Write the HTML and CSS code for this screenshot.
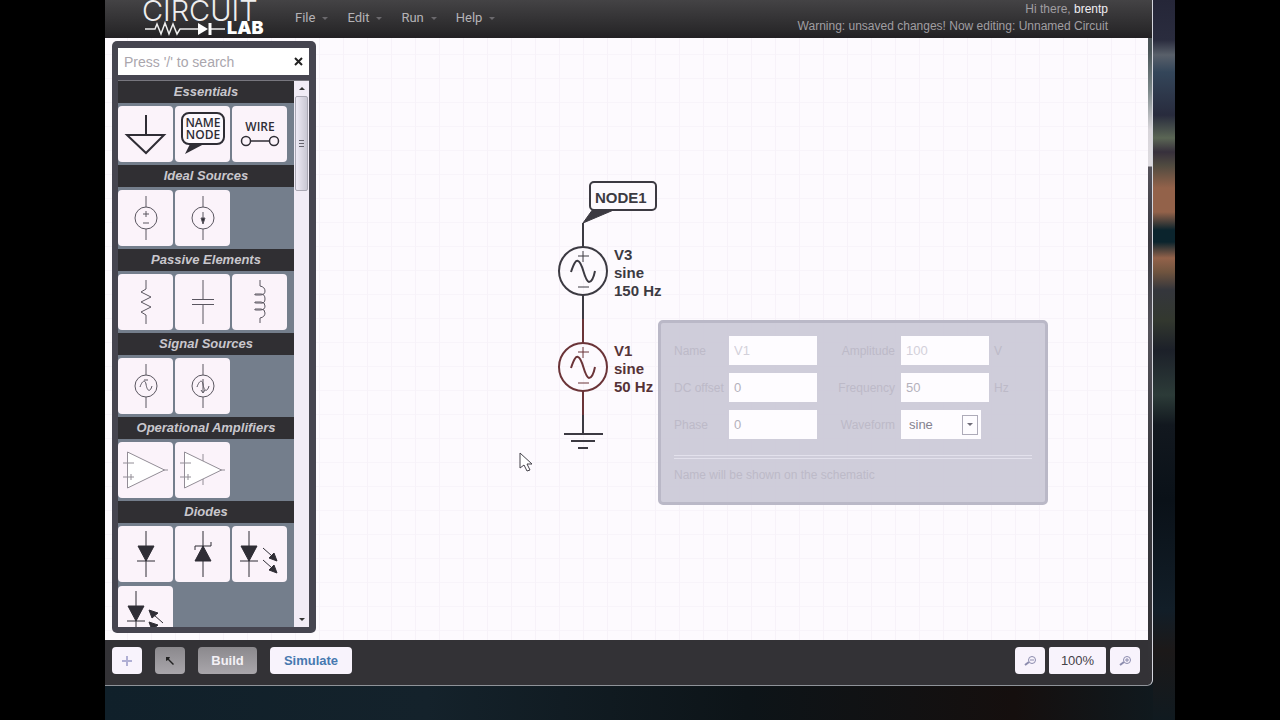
FILE: index.html
```html
<!DOCTYPE html>
<html lang="en">
<head>
    <meta charset="UTF-8">
    <meta name="viewport" content="width=device-width, initial-scale=1.0">
    <title>CircuitLab</title>
    <link rel="stylesheet" href="styles.css">
</head>
<body>
    <div class="desktop">
        <div class="window">
            <header class="topbar">
                <a href="#" class="logo" aria-label="CircuitLab home">
                    <svg width="130" height="36" viewBox="0 0 130 36">
                        <text class="logo-circuit" x="-2" y="21" font-size="29">CIRCUIT</text>
                        <path d="M1 29h10l2-5 4 10 4-11 4 11 4-10 4 10 3-5h18M66 29h15" fill="none" stroke="#eee" stroke-width="1.5"/>
                        <path d="M54 23l10 6-10 6z" fill="#fff"/>
                        <path d="M66 23v12" stroke="#fff" stroke-width="3"/>
                        <text class="logo-lab" x="83" y="34" font-size="18">LAB</text>
                    </svg>
                </a>
                <nav class="menu">
                    <button type="button">File</button>
                    <button type="button">Edit</button>
                    <button type="button">Run</button>
                    <button type="button">Help</button>
                </nav>
                <div class="account">
                    <div>Hi there, <a href="#">brentp</a></div>
                    <div>Warning: unsaved changes! Now editing: Unnamed Circuit</div>
                </div>
            </header>

            <main class="workspace">
                <svg class="schematic" width="100%" height="100%">
                    <g fill="none" stroke="#3c3a42" stroke-width="2">
                        <path d="M478 185v24M478 257v24"/>
                        <circle cx="478" cy="233" r="24"/>
                        <path d="M466 234c3-9 5-12 7-11c5 1 6 20 11 21c3 0 5-6 6-11"/>
                        <path d="M473 218h11M478 213v11M473 249h11" stroke-width="1"/>
                        <path d="M478 185l10-14h23z" fill="#3c3a42" stroke-width="1"/>
                        <rect x="485" y="144" width="66" height="28" rx="4" fill="#fdfafe"/>
                        <path d="M478 377v19M459 396h39M466 403h24M473 410h10"/>
                    </g>
                    <g fill="none" stroke="#6b3438" stroke-width="2">
                        <path d="M478 281v24M478 353v24"/>
                        <circle cx="478" cy="329" r="24"/>
                        <path d="M466 330c3-9 5-12 7-11c5 1 6 20 11 21c3 0 5-6 6-11"/>
                        <path d="M473 314h11M478 309v11M473 345h11" stroke-width="1"/>
                    </g>
                    <g class="part-label">
                        <text x="490" y="165">NODE1</text>
                        <text x="509" y="222">V3</text>
                        <text x="509" y="240">sine</text>
                        <text x="509" y="258">150 Hz</text>
                    </g>
                    <g class="part-label selected">
                        <text x="509" y="318">V1</text>
                        <text x="509" y="336">sine</text>
                        <text x="509" y="354">50 Hz</text>
                    </g>
                    <path d="M415 415v15l4-3 3 6 3-1-3-6h5z" fill="#fff" stroke="#45434b" stroke-width="1"/>
                </svg>

                <aside class="palette">
                    <div class="search">
                        <input type="text" placeholder="Press '/' to search" aria-label="Search parts">
                        <button type="button" aria-label="Clear search">
                            <svg width="10" height="10" viewBox="0 0 10 10"><path d="M2 1l7 7M9 1l-7 7" stroke="#222" stroke-width="2"/></svg>
                        </button>
                    </div>
                    <div class="parts">
                        <div class="part-list">
                            <h2>Essentials</h2>
                            <div class="tiles">
                                <button type="button" aria-label="Ground">
                                    <svg viewBox="0 0 55 56"><path d="M28 9v20M9 29h37L28 47z" fill="none" stroke="#2f2d35" stroke-width="2"/></svg>
                                </button>
                                <button type="button">
                                    <svg viewBox="0 0 55 56">
                                        <rect x="7" y="7" width="42" height="31" rx="7" fill="#fdf8fd" stroke="#2f2d35" stroke-width="2"/>
                                        <path d="M10 48l5-10h14z" fill="#2f2d35"/>
                                        <text class="tile-text" x="28" y="21" font-size="12">NAME</text>
                                        <text class="tile-text" x="28" y="33" font-size="12">NODE</text>
                                    </svg>
                                </button>
                                <button type="button">
                                    <svg viewBox="0 0 55 56">
                                        <text class="tile-text" x="28" y="25" font-size="12">WIRE</text>
                                        <g fill="none" stroke="#2f2d35" stroke-width="1.5"><circle cx="14" cy="35" r="4.5"/><circle cx="42" cy="35" r="4.5"/><path d="M18 35h20"/></g>
                                    </svg>
                                </button>
                            </div>
                            <h2>Ideal Sources</h2>
                            <div class="tiles">
                                <button type="button" aria-label="Voltage source">
                                    <svg class="line-icon" viewBox="0 0 55 56"><circle cx="28" cy="28" r="11"/><path d="M28 6v11M28 39v11M25 24h6M28 21v6M25 33h6"/></svg>
                                </button>
                                <button type="button" aria-label="Current source">
                                    <svg class="line-icon" viewBox="0 0 55 56"><circle cx="28" cy="28" r="11"/><path d="M28 6v11M28 39v11M28 22v8"/><path d="M26 28h4l-2 6z" fill="#2f2d35"/></svg>
                                </button>
                            </div>
                            <h2>Passive Elements</h2>
                            <div class="tiles">
                                <button type="button" aria-label="Resistor">
                                    <svg class="line-icon" viewBox="0 0 55 56"><path d="M28 6v9l-5 3 10 5-10 5 10 5-10 5 5 3v9"/></svg>
                                </button>
                                <button type="button" aria-label="Capacitor">
                                    <svg class="line-icon" viewBox="0 0 55 56"><path d="M28 6v19M17 25.5h22M17 30.5h22M28 31v19"/></svg>
                                </button>
                                <button type="button" aria-label="Inductor">
                                    <svg class="line-icon" viewBox="0 0 55 56"><path d="M28 6v6q5 1 5 5t-5 4h-4q-2 0-1-1h6q4 0 4 5t-5 4h-4q-2 0-1-1h6q4 0 4 4t-5 4h-4q-2 0-1-1h6q4 0 4 4t-5 5v5"/></svg>
                                </button>
                            </div>
                            <h2>Signal Sources</h2>
                            <div class="tiles">
                                <button type="button" aria-label="Voltage signal">
                                    <svg class="line-icon" viewBox="0 0 55 56"><circle cx="28" cy="28" r="11"/><path d="M28 6v11M28 39v11M22 29c2-6 5-8 6-3c1 7 4 9 6 2M26 22h4"/></svg>
                                </button>
                                <button type="button" aria-label="Current signal">
                                    <svg class="line-icon" viewBox="0 0 55 56"><circle cx="28" cy="28" r="11"/><path d="M28 6v11M28 39v11M22 29c2-6 5-8 6-3c1 7 4 9 6 2M28 21v13M26 32l2 3 2-3"/></svg>
                                </button>
                            </div>
                            <h2>Operational Amplifiers</h2>
                            <div class="tiles">
                                <button type="button" aria-label="Op-amp">
                                    <svg class="line-icon thin" viewBox="0 0 55 56"><path d="M9.5 10v36l37-18zM46 28h4M5 21h11M5 35h11M13 32v6" fill="#fff"/></svg>
                                </button>
                                <button type="button" aria-label="Op-amp with supply rails">
                                    <svg class="line-icon thin" viewBox="0 0 55 56"><path d="M9.5 10v36l37-18zM46 28h4M5 21h11M5 35h11M13 32v6M28 12v7M28 37v6" fill="#fff"/></svg>
                                </button>
                            </div>
                            <h2>Diodes</h2>
                            <div class="tiles">
                                <button type="button" aria-label="Diode">
                                    <svg class="solid-icon" viewBox="0 0 55 56"><path d="M28 5v46M19 35h18"/><path d="M20 20h16l-8 15z"/></svg>
                                </button>
                                <button type="button" aria-label="Zener diode">
                                    <svg class="solid-icon" viewBox="0 0 55 56"><path d="M28 5v46"/><path d="M20 24v-4h16v-4" fill="none"/><path d="M20 35h16l-8-15z"/></svg>
                                </button>
                                <button type="button" aria-label="LED">
                                    <svg class="solid-icon" viewBox="0 0 55 56"><path d="M17 5v46M8 35h18M31 22l9 8M31 34l9 8"/><path d="M9 20h16l-8 15zM45 35l-8-3 5-5zM45 47l-8-3 5-5z"/></svg>
                                </button>
                                <button type="button" aria-label="Photodiode">
                                    <svg class="solid-icon" viewBox="0 0 55 56"><path d="M18 5v46M9 35h18M45 37l-9-8M45 49l-9-8"/><path d="M10 20h16l-8 15zM31 24l9 3-6 5zM31 36l9 3-6 5z"/></svg>
                                </button>
                            </div>
                        </div>
                        <div class="scrollbar">
                            <span class="arrow up"></span>
                            <div class="thumb"></div>
                            <span class="arrow down"></span>
                        </div>
                    </div>
                </aside>

                <form class="properties">
                    <div class="fields">
                        <label for="name">Name</label>
                        <input type="text" id="name" class="faded" value="V1">
                        <label for="amp">Amplitude</label>
                        <input type="text" id="amp" class="faded" value="100">
                        <span class="unit">V</span>
                        <label for="offset">DC offset</label>
                        <input type="text" id="offset" value="0">
                        <label for="freq">Frequency</label>
                        <input type="text" id="freq" value="50">
                        <span class="unit">Hz</span>
                        <label for="phase">Phase</label>
                        <input type="text" id="phase" value="0">
                        <label for="wave">Waveform</label>
                        <span class="select-box">
                            <select id="wave"><option>sine</option></select>
                            <span class="select-arrow"></span>
                        </span>
                    </div>
                    <p>Name will be shown on the schematic</p>
                </form>
            </main>

            <footer class="toolbar">
                <button type="button" class="square" aria-label="Pan">
                    <svg width="12" height="12" viewBox="0 0 12 12"><path d="M6 1v10M1 6h10" stroke="#b0afd4" stroke-width="2"/></svg>
                </button>
                <button type="button" class="square pressed" aria-label="Select">
                    <svg width="12" height="12" viewBox="0 0 12 12"><path d="M2 2h4L5 4l5 5-1 1-5-5-2 1z" fill="#222"/></svg>
                </button>
                <button type="button" class="build pressed">Build</button>
                <button type="button" class="simulate">Simulate</button>
                <div class="zoom">
                    <button type="button" class="square" aria-label="Zoom out">
                        <svg width="14" height="12" viewBox="0 0 14 12"><g fill="none" stroke="#8c8cae"><circle cx="9" cy="5" r="3.5"/><path d="M7 5h4"/><path d="M6 7l-4 3" stroke-width="2"/></g></svg>
                    </button>
                    <input type="text" value="100%" aria-label="Zoom level">
                    <button type="button" class="square" aria-label="Zoom in">
                        <svg width="14" height="12" viewBox="0 0 14 12"><g fill="none" stroke="#8c8cae"><circle cx="9" cy="5" r="3.5"/><path d="M7 5h4M9 3v4"/><path d="M6 7l-4 3" stroke-width="2"/></g></svg>
                    </button>
                </div>
            </footer>
        </div>
    </div>
</body>
</html>
```

FILE: styles.css
```css
* {
    box-sizing: border-box;
}
body {
    margin: 0;
    background: #000;
    font-family: Arial, "Liberation Sans", sans-serif;
}
button, input, select {
    font-family: inherit;
    border: 0;
    padding: 0;
    margin: 0;
}
.desktop {
    min-height: 100vh;
    margin: 0 105px;
    padding: 0 22px 34px 0;
    display: flex;
    background:
        linear-gradient(90deg, #10202a 0, #14222b 30%, #0d1418 60%, #150f0e 85%, transparent 98%) bottom / 100% 34px no-repeat,
        linear-gradient(#252638 0, #2a2c3e 40px, #59606a 55px, #34465a 72px, #282b3d 115px, #5b6655 138px, #37303c 152px, #4f4a40 165px, #93624a 188px, #93624a 212px, #0b242d 230px, #0b242d 242px, #93624a 258px, #70543f 272px, #34363c 290px, #33382f 320px, #1c2029 350px, #2c3b38 395px, #12181f 425px, #0a1118 500px, #121e28 610px, #1c1919 650px, #101a20 100%) right / 22px 100% no-repeat,
        #10191e;
}
.window {
    flex: 1;
    display: flex;
    flex-direction: column;
    background:
        linear-gradient(#4a4b50 0, #4a5558 50px, #7b8789 90px, #d8d5da 130px, #dedbe0 166px, #55525a 167px, #3a3940 240px, #55535b 330px, #38383d 480px, #333236 100%) right / 4px 100% no-repeat,
        #333236;
    border-right: 1px solid #d5d6de;
    border-bottom: 1px solid #8f9399;
    border-bottom-right-radius: 6px;
    padding-right: 4px;
}

/* top bar */
.topbar {
    height: 38px;
    display: flex;
    align-items: center;
    padding: 0 44px 2px 39px;
    background: linear-gradient(#444345, #2a292b 80%, #222023);
    margin-right: -4px;
}
.logo svg {
    display: block;
    overflow: visible;
}
.logo-circuit {
    font-family: Inter, sans-serif;
    font-weight: 300;
    fill: #eee;
}
.logo-lab {
    font-family: Inter, sans-serif;
    font-weight: 900;
    fill: #fff;
}
.menu {
    display: flex;
    gap: 19px;
    margin-left: 21px;
}
.menu button {
    display: flex;
    align-items: center;
    gap: 7px;
    background: none;
    color: #b5b3b6;
    font-family: Roboto, sans-serif;
    font-size: 13px;
    line-height: 16px;
}
.menu button::after {
    content: "";
    border: 3px solid transparent;
    border-top-color: #6b696d;
    border-bottom: 0;
}
.account {
    margin-left: auto;
    text-align: right;
    color: #a09ea2;
    font-size: 12px;
    line-height: 17px;
}
.account a {
    color: #f0eef2;
    text-decoration: none;
}

/* workspace */
.workspace {
    flex: 1;
    position: relative;
    display: flex;
    padding: 3px 7px 7px;
    background-color: #fdfafe;
    background-image:
        linear-gradient(90deg, #f7f2f9 1px, transparent 1px),
        linear-gradient(#f8f4fa 1px, transparent 1px);
    background-size: 24px 24px;
    background-position: 22px 16px;
}
.schematic {
    position: absolute;
    inset: 0;
}
.part-label {
    font-size: 15px;
    font-weight: bold;
    fill: #3c3a42;
}
.part-label.selected {
    fill: #563337;
}

/* parts palette */
.palette {
    position: relative;
    width: 204px;
    display: flex;
    flex-direction: column;
    gap: 5px;
    padding: 7px 7px 6px 6px;
    background: #464550;
    border-radius: 5px;
}
.search {
    display: flex;
    align-items: center;
    height: 27px;
    background: #fff;
}
.search input {
    flex: 1;
    min-width: 0;
    padding-left: 6px;
    background: none;
    font-size: 14px;
}
.search input::placeholder {
    color: #aaa6ad;
}
.search button {
    width: 22px;
    background: none;
    line-height: 0;
}
.parts {
    flex: 1 1 0;
    min-height: 0;
    display: flex;
    border-top: 1px solid #77767e;
}
.part-list {
    flex: 1;
    height: 546px;
    overflow: hidden;
    background: #747e8c;
}
.part-list h2 {
    margin: 0;
    background: #302f33;
    color: #c9c7cd;
    font-size: 13px;
    font-style: italic;
    line-height: 22px;
    text-align: center;
}
.tiles {
    display: flex;
    flex-wrap: wrap;
    gap: 4px 2px;
    padding: 3px 0;
}
.tiles button {
    width: 55px;
    height: 56px;
    background: #fbf3fa;
    border-radius: 4px;
}
.tiles svg {
    display: block;
    width: 55px;
    height: 56px;
}
.tile-text {
    font-family: "Open Sans", sans-serif;
    font-weight: 600;
    fill: #2f2d35;
    text-anchor: middle;
}
.line-icon {
    fill: none;
    stroke: #5a5660;
    stroke-width: 1;
}
.line-icon.thin {
    stroke: #928d96;
}
.solid-icon {
    fill: #2f2d35;
    stroke: #2f2d35;
    stroke-width: 1;
}
.scrollbar {
    width: 15px;
    display: flex;
    flex-direction: column;
    align-items: center;
    background: #f1ecf6;
}
.arrow {
    margin: 6px 0;
    border: 3px solid transparent;
}
.up {
    border-bottom-color: #333;
    border-top: 0;
}
.down {
    margin-top: auto;
    border-top-color: #333;
    border-bottom: 0;
}
.thumb {
    width: 13px;
    height: 95px;
    border: 1px solid #a9a7b3;
    border-radius: 2px;
    background:
        repeating-linear-gradient(#66646e 0 1px, transparent 1px 3px) center / 5px 7px no-repeat,
        linear-gradient(90deg, #eeeaf5, #c9c7d3);
}

/* fading properties box */
.properties {
    position: absolute;
    left: 553px;
    top: 282px;
    width: 390px;
    padding: 13px;
    background: rgba(202, 200, 214, 0.9);
    border: 3px solid #bab8c7;
    border-radius: 5px;
    color: #bdbac8;
    font-size: 12px;
}
.fields {
    display: grid;
    grid-template-columns: 55px 88px 84px 88px 1fr;
    grid-auto-rows: 29px;
    row-gap: 8px;
    align-items: center;
    padding-bottom: 16px;
    border-bottom: 4px double #e3e1ec;
}
.fields label {
    white-space: nowrap;
}
.fields label:nth-of-type(even) {
    padding-right: 6px;
    text-align: right;
}
.fields input, .select-box {
    width: 88px;
    height: 29px;
    background: #fefcff;
    color: #b4b1bc;
    font-size: 13px;
}
.fields input {
    padding: 0 5px;
}
.fields .faded {
    color: #d3d0da;
}
.unit {
    padding-left: 5px;
}
.select-box {
    width: 80px;
    display: flex;
    align-items: center;
    padding: 0 3px 0 8px;
}
.select-box select {
    flex: 1;
    appearance: none;
    background: none;
    color: #85828f;
    font-size: 13px;
}
.select-arrow {
    width: 16px;
    height: 20px;
    display: grid;
    place-items: center;
    border: 1px solid #aeabb9;
}
.select-arrow::after {
    content: "";
    border: 3px solid transparent;
    border-top-color: #6f6c78;
    border-bottom: 0;
}
.properties p {
    margin: 6px 0 4px;
    line-height: 20px;
}

/* bottom bar */
.toolbar {
    height: 45px;
    display: flex;
    align-items: center;
    padding: 0 8px 4px 7px;
    background: #333236;
}
.toolbar button, .toolbar input {
    height: 27px;
    border-radius: 4px;
    background: #f8f3fc;
    font-size: 13px;
}
.toolbar .square {
    width: 30px;
    margin-right: 13px;
    line-height: 0;
}
.toolbar .pressed {
    background: linear-gradient(#8b898d, #a9a6ab);
}
.toolbar .build {
    width: 59px;
    margin-right: 13px;
    color: #f3f0f5;
    font-weight: bold;
}
.toolbar .simulate {
    width: 82px;
    color: #4779b0;
    font-weight: bold;
}
.zoom {
    display: flex;
    gap: 4px;
    margin-left: auto;
}
.toolbar .zoom .square {
    margin: 0;
}
.toolbar .zoom input {
    width: 57px;
    border-radius: 2px;
    color: #454249;
    text-align: center;
}
```
